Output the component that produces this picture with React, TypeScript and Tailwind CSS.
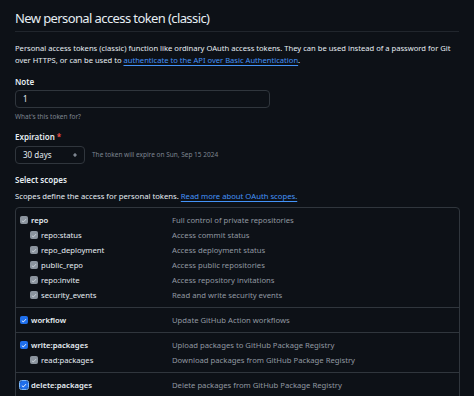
import React from "react";

type Scope = { name: string; desc: string; level: 0 | 1; kind: "blue" | "grey" | "focus" };

const groups: Scope[][] = [
  [
    { name: "repo", desc: "Full control of private repositories", level: 0, kind: "grey" },
    { name: "repo:status", desc: "Access commit status", level: 1, kind: "grey" },
    { name: "repo_deployment", desc: "Access deployment status", level: 1, kind: "grey" },
    { name: "public_repo", desc: "Access public repositories", level: 1, kind: "grey" },
    { name: "repo:invite", desc: "Access repository invitations", level: 1, kind: "grey" },
    { name: "security_events", desc: "Read and write security events", level: 1, kind: "grey" },
  ],
  [{ name: "workflow", desc: "Update GitHub Action workflows", level: 0, kind: "blue" }],
  [
    { name: "write:packages", desc: "Upload packages to GitHub Package Registry", level: 0, kind: "blue" },
    { name: "read:packages", desc: "Download packages from GitHub Package Registry", level: 1, kind: "grey" },
  ],
  [{ name: "delete:packages", desc: "Delete packages from GitHub Package Registry", level: 0, kind: "focus" }],
];

function Check({ kind }: { kind: Scope["kind"] }) {
  const box =
    kind === "grey"
      ? "bg-[#8b949e] border-[#8b949e]"
      : kind === "focus"
        ? "bg-[#1f6feb] border-[#1f6feb] outline outline-[1.5px] outline-offset-[0.5px] outline-[#79b8ff]"
        : "bg-[#1f6feb] border-[#1f6feb]";
  return (
    <span className={`flex h-[8px] w-[8px] shrink-0 items-center justify-center rounded-[1.5px] border ${box}`}>
      <svg viewBox="0 0 16 16" className="h-[7px] w-[7px]" fill={kind === "grey" ? "#d0d7de" : "#ffffff"}>
        <path d="M13.78 4.22a.75.75 0 0 1 0 1.06l-7.25 7.25a.75.75 0 0 1-1.06 0L2.22 9.28a.75.75 0 0 1 1.06-1.06L6 10.94l6.72-6.72a.75.75 0 0 1 1.06 0Z" />
      </svg>
    </span>
  );
}

export default function App() {
  return (
    <div
      className="h-[396px] w-[474px] overflow-hidden bg-[#0d1117] px-[15px] pt-[8px] text-[#e6edf3]"
      style={{ fontFamily: '"Noto Sans", "Open Sans", sans-serif' }}
    >
      <h1 className="border-b border-[#21262d] pb-[3px] text-[13px] leading-[20px] font-normal tracking-[-0.6px]">
        New personal access token (classic)
      </h1>

      <p className="mt-[10px] text-[7.6px] leading-[12px]">
        <span className="whitespace-nowrap">
          Personal access tokens (classic) function like ordinary OAuth access tokens. They can be used instead of a password for Git
        </span>
        <br />
        over HTTPS, or can be used to{" "}
        <a className="text-[#4493f8] underline underline-offset-2">authenticate to the API over Basic Authentication</a>.
      </p>

      <div className="mt-[10px] text-[8px] leading-[11px] font-semibold">Note</div>
      <div className="mt-[3px] flex h-[18px] w-[255px] items-center rounded-[4px] border border-[#30363d] bg-[#0d1117] px-[7px] text-[8px]">
        1
      </div>
      <div className="mt-[4px] text-[6.5px] leading-[9px] text-[#7d8590]">What's this token for?</div>

      <div className="mt-[10px] text-[8px] leading-[11px] font-semibold">
        Expiration <span className="text-[#f85149]">*</span>
      </div>
      <div className="mt-[4px] flex items-center gap-[7px]">
        <div className="flex h-[18px] w-[70px] items-center justify-between rounded-[4px] border border-[#30363d] bg-[#0d1117] pr-[5px] pl-[7px] text-[8px]">
          <span>30 days</span>
          <svg viewBox="0 0 16 16" className="h-[8px] w-[8px]" fill="#7d8590">
            <path d="m4.427 7.427 3.396-3.396a.25.25 0 0 1 .354 0l3.396 3.396A.25.25 0 0 1 11.396 8H4.604a.25.25 0 0 1-.177-.427Zm0 1.146 3.396 3.396a.25.25 0 0 0 .354 0l3.396-3.396A.25.25 0 0 0 11.396 8H4.604a.25.25 0 0 0-.177.427Z" />
          </svg>
        </div>
        <span className="text-[6.5px] text-[#7d8590]">The token will expire on Sun, Sep 15 2024</span>
      </div>

      <div className="mt-[10px] text-[8px] leading-[11px] font-semibold">Select scopes</div>
      <p className="mt-[5px] text-[7.7px] leading-[12px]">
        Scopes define the access for personal tokens.{" "}
        <a className="text-[#4493f8] underline underline-offset-2">Read more about OAuth scopes.</a>
      </p>

      <div className="mt-[5px] w-[445px] rounded-t-[4px] border border-[#30363d]">
        {groups.map((g, i) => (
          <div key={i} className={`pt-[5px] pb-[4px] ${i > 0 ? "border-t border-[#30363d]" : ""}`}>
            {g.map((s) => (
              <div key={s.name} className="flex h-[15px] items-center text-[7.7px]">
                <div className={`flex w-[156px] items-center gap-[3px] ${s.level ? "pl-[14px]" : "pl-[4px]"}`}>
                  <Check kind={s.kind} />
                  <span className={s.level ? "" : "font-semibold"}>{s.name}</span>
                </div>
                <span className="text-[#9198a1]">{s.desc}</span>
              </div>
            ))}
          </div>
        ))}
      </div>
    </div>
  );
}
